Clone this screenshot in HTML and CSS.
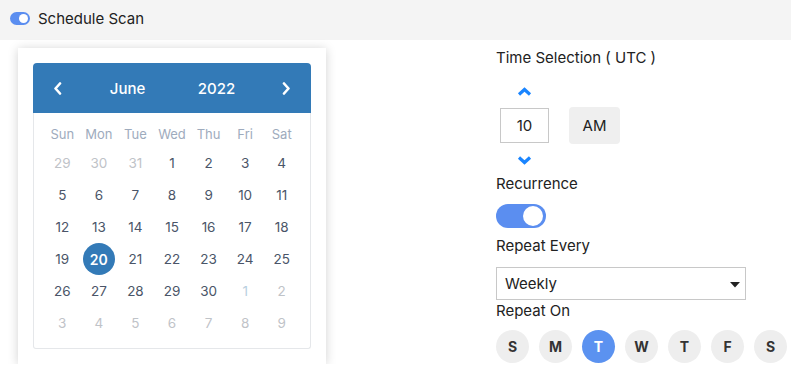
FILE: index.html
```html
<!DOCTYPE html>
<html>
<head>
<meta charset="utf-8">
<link rel="stylesheet" href="styles.css">
</head>
<body>
<div class="topbar">
  <span class="mini-toggle"><span class="mini-knob"></span></span>
  <span class="topbar-title">Schedule Scan</span>
</div>
<div class="main">
  <div class="card">
    <div class="cal-head">
      <span class="cal-nav"><svg width="10" height="13" viewBox="0 0 10 13"><path d="M7 1.5 L2.5 6.5 L7 11.5" fill="none" stroke="#fff" stroke-width="2.6" stroke-linecap="round" stroke-linejoin="round"/></svg></span>
      <span class="cal-title">June</span>
      <span class="cal-title">2022</span>
      <span class="cal-nav"><svg width="10" height="13" viewBox="0 0 10 13"><path d="M3 1.5 L7.5 6.5 L3 11.5" fill="none" stroke="#fff" stroke-width="2.6" stroke-linecap="round" stroke-linejoin="round"/></svg></span>
    </div>
    <div class="cal-body">
      <div class="dow">Sun</div><div class="dow">Mon</div><div class="dow">Tue</div><div class="dow">Wed</div><div class="dow">Thu</div><div class="dow">Fri</div><div class="dow">Sat</div>
      <div class="d out">29</div><div class="d out">30</div><div class="d out">31</div><div class="d">1</div><div class="d">2</div><div class="d">3</div><div class="d">4</div>
      <div class="d">5</div><div class="d">6</div><div class="d">7</div><div class="d">8</div><div class="d">9</div><div class="d">10</div><div class="d">11</div>
      <div class="d">12</div><div class="d">13</div><div class="d">14</div><div class="d">15</div><div class="d">16</div><div class="d">17</div><div class="d">18</div>
      <div class="d">19</div><div class="d"><span class="sel">20</span></div><div class="d">21</div><div class="d">22</div><div class="d">23</div><div class="d">24</div><div class="d">25</div>
      <div class="d">26</div><div class="d">27</div><div class="d">28</div><div class="d">29</div><div class="d">30</div><div class="d out next">1</div><div class="d out">2</div>
      <div class="d out">3</div><div class="d out">4</div><div class="d out">5</div><div class="d out">6</div><div class="d out">7</div><div class="d out">8</div><div class="d out">9</div>
    </div>
  </div>
  <div class="side">
    <div class="label">Time Selection ( UTC )</div>
    <div class="spin spin-up"><svg width="15" height="9" viewBox="0 0 15 9"><path d="M2 7.5 L7.5 2.5 L13 7.5" fill="none" stroke="#1a85ff" stroke-width="3.2"/></svg></div>
    <div class="time-row">
      <div class="hour">10</div>
      <div class="ampm">AM</div>
    </div>
    <div class="spin spin-down"><svg width="15" height="9" viewBox="0 0 15 9"><path d="M2 1.5 L7.5 6.5 L13 1.5" fill="none" stroke="#1a85ff" stroke-width="3.2"/></svg></div>
    <div class="label label-rec">Recurrence</div>
    <div class="toggle"><span class="knob"></span></div>
    <div class="label label-every">Repeat Every</div>
    <div class="select"><span>Weekly</span><svg width="10" height="6" viewBox="0 0 10 6"><path d="M0 0 L10 0 L5 5.5 Z" fill="#222"/></svg></div>
    <div class="label label-on">Repeat On</div>
    <div class="days">
      <span class="day">S</span><span class="day">M</span><span class="day active">T</span><span class="day">W</span><span class="day">T</span><span class="day">F</span><span class="day">S</span>
    </div>
  </div>
</div>
</body>
</html>
```

FILE: styles.css
```css
* { box-sizing: border-box; }
body {
  margin: 0;
  background: #fff;
  font-family: Inter, "Noto Sans", sans-serif;
  color: #222;
}
.topbar {
  height: 40px;
  background: #f4f4f4;
  display: flex;
  align-items: center;
  padding-left: 10px;
  padding-bottom: 3px;
}
.mini-toggle {
  width: 20px;
  height: 13px;
  border-radius: 7px;
  background: #5b8ef0;
  position: relative;
  display: inline-block;
}
.mini-knob {
  position: absolute;
  right: 2px;
  top: 2px;
  width: 9px;
  height: 9px;
  border-radius: 50%;
  background: #fff;
}
.topbar-title {
  margin-left: 8px;
  font-size: 15px;
  color: #222;
}
.main {
  display: flex;
  align-items: flex-start;
}
.card {
  margin-left: 18px;
  margin-top: 8px;
  width: 308px;
  padding: 15px;
  background: #fff;
  box-shadow: 0 1px 10px rgba(0,0,0,0.18);
}
.cal-head {
  height: 50px;
  background: #337ab7;
  border-radius: 4px 4px 0 0;
  display: grid;
  grid-template-columns: 50px 89px 89px 50px;
  align-items: center;
  justify-items: center;
  color: #fff;
}
.cal-nav { display: flex; align-items: center; }
.cal-title {
  font-size: 15px;
  font-weight: 500;
}
.cal-body {
  border: 1px solid #e5e7ea;
  border-top: none;
  border-radius: 0 0 3px 3px;
  padding: 8px 10px 9px;
  display: grid;
  grid-template-columns: repeat(7, 1fr);
  grid-auto-rows: 32px;
  grid-template-rows: 26px;
}
.dow {
  font-size: 13px;
  color: #9eabbd;
  display: flex;
  align-items: center;
  justify-content: center;
}
.d {
  font-size: 13.5px;
  color: #4a5568;
  display: flex;
  align-items: center;
  justify-content: center;
}
.d.out { color: #bfc3c8; }
.d.next { color: #b9cfe0; }
.sel {
  width: 32px;
  height: 32px;
  border-radius: 50%;
  background: #337ab7;
  color: #fff;
  font-weight: 600;
  font-size: 14px;
  display: flex;
  align-items: center;
  justify-content: center;
}
.side {
  margin-left: 170px;
  padding-top: 8px;
  display: flex;
  flex-direction: column;
  align-items: flex-start;
}
.label {
  font-size: 15px;
  line-height: 20px;
  height: 20px;
  color: #222;
}
.spin {
  width: 49px;
  margin-left: 4px;
  height: 9px;
  display: flex;
  justify-content: center;
}
.spin svg { display: block; }
.spin-up { margin-top: 19px; }
.time-row {
  margin-top: 11px;
  display: flex;
  align-items: center;
  height: 37px;
  margin-left: 4px;
}
.hour {
  width: 49px;
  height: 35px;
  border: 1px solid #c8c8c8;
  font-size: 15px;
  display: flex;
  align-items: center;
  justify-content: center;
}
.ampm {
  margin-left: 20px;
  width: 51px;
  height: 37px;
  background: #efefef;
  border-radius: 4px;
  font-size: 15px;
  display: flex;
  align-items: center;
  justify-content: center;
}
.spin-down { margin-top: 12px; }
.label-rec { margin-top: 9px; }
.toggle {
  margin-top: 10px;
  width: 50px;
  height: 24px;
  border-radius: 12px;
  background: #5b8ef0;
  position: relative;
}
.knob {
  position: absolute;
  right: 3px;
  top: 2px;
  width: 20px;
  height: 20px;
  border-radius: 50%;
  background: #fff;
}
.label-every { margin-top: 8px; }
.select {
  margin-top: 11px;
  width: 250px;
  height: 33px;
  border: 1px solid #c8c8c8;
  display: flex;
  align-items: center;
  justify-content: space-between;
  padding: 0 5px 0 8px;
  font-size: 15px;
}
.select svg { margin-top: 2px; }
.label-on { margin-top: 1px; }
.days {
  margin-top: 9px;
  display: flex;
  gap: 10px;
}
.day {
  width: 33px;
  height: 33px;
  border-radius: 50%;
  background: #eeeeee;
  font-size: 14px;
  font-weight: 700;
  color: #333;
  display: flex;
  align-items: center;
  justify-content: center;
}
.day.active {
  background: #5b92f0;
  color: #fff;
}
```
